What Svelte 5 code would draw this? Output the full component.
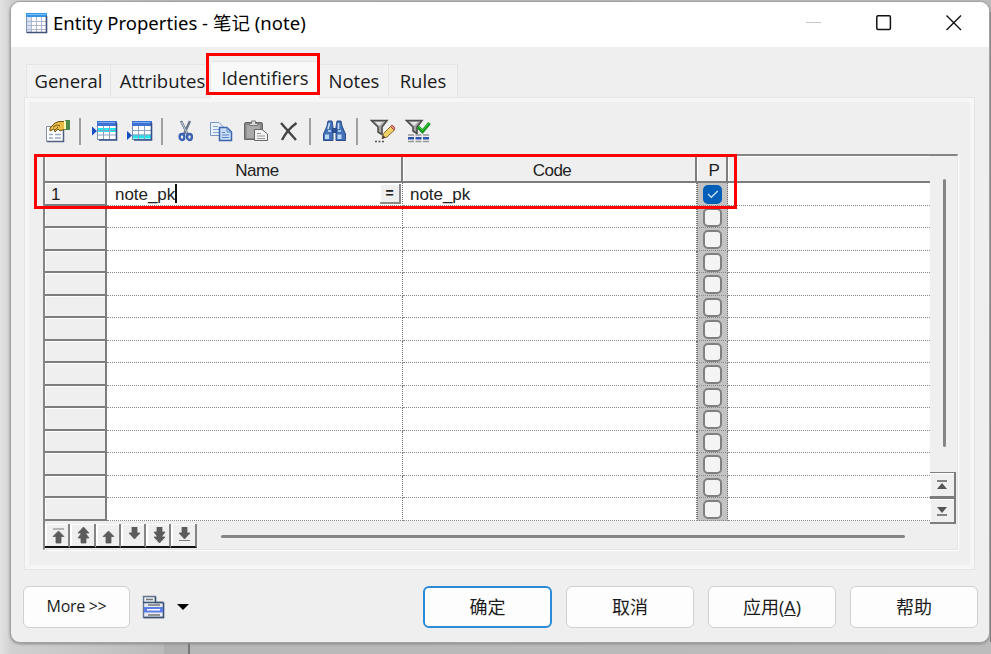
<script lang="ts">
	const tabs = ['General', 'Attributes', 'Identifiers', 'Notes', 'Rules'];
	const activeTab = 'Identifiers';

	interface Row {
		name: string;
		code: string;
		primary: boolean;
	}

	const identifiers: Row[] = [{ name: 'note_pk', code: 'note_pk', primary: true }];

	// The list always shows 15 lines, the unused ones stay blank
	const rows: (Row | null)[] = Array.from({ length: 15 }, (_, i) => identifiers[i] ?? null);

	const moves = [
		'M4 2H15M9.5 4L15 9.5H12V16H7V9.5H4Z',
		'M9.5 0L15 6H12V7L15 11H12V16H7V11H4L7 7V6H4Z',
		'M9.5 4L15 9.5H12V16H7V9.5H4Z',
		'M9.5 12L15 6H12V0H7V6H4Z',
		'M9.5 16L15 10H12V9L15 5H12V0H7V5H4L7 9V10H4Z',
		'M4 13.5H15M9.5 12L15 6H12V0H7V6H4Z'
	];
</script>

{#snippet tableIcon(lit: number)}
	<rect x="5.5" y="1.5" width="19" height="18" fill="#fff" stroke="#7890b8" />
	<rect x="5" y="1" width="20" height="5" fill="#3d72d2" />
	<path d="M6 2.5H23" stroke="#79a9ef" />
	<rect x="6" y={lit} width="18" height="4" fill="#25e5ec" />
	<path d="M6 10.5H24M6 15H24M11.5 6V19M17.5 6V19" stroke="#8ba1c2" fill="none" />
	<path d="M24.5 3V20H7" stroke="#344f87" stroke-width="1.6" fill="none" />
{/snippet}

<div class="desktop">
	<div class="window">
		<header class="titlebar">
			<svg class="app-icon" width="22" height="21" viewBox="0 0 22 21">
				<rect x=".5" y=".5" width="20" height="19" fill="#fff" stroke="#8294b3" />
				<rect width="21" height="4" fill="#3794e5" />
				<path d="M1 1.5H20" stroke="#79c5f5" />
				<rect x="1" y="4" width="4" height="15" fill="#d7e3f2" />
				<path d="M1 8.5H20M1 12.5H20M1 16.5H20M5.5 4V19M10.5 4V19M15.5 4V19" stroke="#adb8cf" />
				<path d="M20.5 3V19.5H1" fill="none" stroke="#3e5277" stroke-width="1.6" />
			</svg>
			<h1>Entity Properties - 笔记 (note)</h1>
			<div class="controls">
				<svg width="16" height="16"><path d="M0 7.5H15" stroke="#c8c8c8" /></svg>
				<svg width="16" height="16"><rect x=".8" y=".8" width="13.6" height="13.6" rx="1.2" fill="none" stroke="#111" stroke-width="1.5" /></svg>
				<svg width="16" height="16"><path d="M.5 .5L15 15M15 .5L.5 15" stroke="#111" stroke-width="1.4" /></svg>
			</div>
		</header>

		<nav class="tabs">
			{#each tabs as tab}
				<button class="tab {tab.toLowerCase()}" class:active={tab === activeTab}>{tab}</button>
			{/each}
		</nav>

		<section class="panel">
			<div class="toolbar">
				<!-- properties -->
				<svg class="t-props" width="26" height="24" viewBox="0 0 26 24">
					<path d="M1.5 6.5H18.5V21.5H1.5Z" fill="#fff" stroke="#8592ac" />
					<path d="M18.5 10V21.5H2" fill="none" stroke="#4f5f80" stroke-width="1.5" />
					<path d="M4 14.5H8M10 14.5H16M4 18H8M10 18H16" stroke="#9daac5" stroke-width="1.5" />
					<path d="M5 8L10 3L14 1.5H20V9L15 11L13 9L10 12L9 9L5 11Z" fill="#e9bb45" stroke="#6c5418" />
					<path d="M8 7L12 5L15 6M10 10L13 7" fill="none" stroke="#765d20" />
					<path d="M20 0H25V10H20Z" fill="#4c8a4b" />
					<path d="M19 1H21V9H19Z" fill="#fff7b0" />
				</svg>
				<i class="sep"></i>
				<!-- insert / add a row -->
				<svg class="t-insert" width="26" height="24" viewBox="0 0 26 24">
					{@render tableIcon(8)}
					<path d="M0 6.5L5 11L0 15.5Z" fill="#174ec1" />
				</svg>
				<svg class="t-add" width="26" height="24" viewBox="0 0 26 24">
					{@render tableIcon(14.5)}
					<path d="M0 11L5 15.5L0 20Z" fill="#174ec1" />
				</svg>
				<i class="sep"></i>
				<svg class="t-cut" width="18" height="24" viewBox="0 0 18 24">
					<path d="M4 1L10.5 14M13 1L7 14" stroke="#68778d" stroke-width="2.5" />
					<path d="M4.5 2L10 13" stroke="#cbd5df" />
					<g fill="none" stroke="#3c63b3" stroke-width="2.4">
						<ellipse cx="5" cy="17" rx="2.4" ry="3" />
						<ellipse cx="12.5" cy="17" rx="2.4" ry="3" />
					</g>
				</svg>
				<svg class="t-copy" width="24" height="22" viewBox="0 0 24 22">
					<path d="M1.5 1.5H10L14.5 6V14.5H1.5Z" fill="#eaf2fd" stroke="#7895c4" />
					<path d="M4 5.5H9M4 8.5H10M4 11.5H10" stroke="#84a4d5" />
					<path d="M10.5 6.5H18L22.5 11V19.5H10.5Z" fill="#c9dcf6" stroke="#3c65ad" stroke-width="1.5" />
					<path d="M18 6.5V11H22.5M13 11.5H16M13 14H20M13 16.5H20" fill="none" stroke="#5f87c7" />
				</svg>
				<svg class="t-paste" width="26" height="23" viewBox="0 0 26 23">
					<path d="M1.5 3.5Q1.5 2.5 3 2.5H18Q19.5 2.5 19.5 4V19.5H1.5Z" fill="#858585" stroke="#666" />
					<path d="M3.5 5H17V18H3.5Z" fill="#aaa" />
					<path d="M6.5 5.5V3.5H8.5V1H12.5V3.5H15V5.5Z" fill="#ddd" stroke="#777" />
					<path d="M11.5 9.5H19L24.5 14V20.5H11.5Z" fill="#f2f2f2" stroke="#666" />
					<path d="M14 13.5H18M14 16H22M14 18.5H22" stroke="#999" />
				</svg>
				<svg class="t-delete" width="20" height="22" viewBox="0 0 20 22">
					<path d="M2 2L17 19M17.5 2Q8 9 3 19" fill="none" stroke="#444" stroke-width="2.4" />
				</svg>
				<i class="sep"></i>
				<svg class="t-find" width="25" height="23" viewBox="0 0 25 23">
					<path d="M6 1H10L11 7V20.5H1.5V14L5 6Z" fill="#4470b6" stroke="#294d8e" />
					<path d="M15 1H19L20 6L23.5 14V20.5H14V7Z" fill="#4470b6" stroke="#294d8e" />
					<path d="M10 8H15V13H10Z" fill="#294d8e" />
					<path d="M3 14.5H7V19H3ZM15.5 14.5H19.5V19H15.5Z" fill="#b7d7f6" />
					<path d="M7.5 3L6 9M16.5 3V9M6 11H9M16 11H19" stroke="#c8e0fa" stroke-width="1.6" />
				</svg>
				<i class="sep"></i>
				<svg class="t-filter" width="26" height="25" viewBox="0 0 26 25">
					<path d="M1.5 1.5H17L12 8V15.5L8 13V8Z" fill="#a6a6a6" stroke="#4d4d4d" stroke-width="1.6" />
					<path d="M5 3H13L9 7Z" fill="#e5e5e5" />
					<path d="M5 22.5H14" stroke="#555" stroke-width="1.5" stroke-dasharray="2 1.5" />
					<path d="M12 19.5L13.5 14.5L20.5 7.5L24.5 11L17 18Z" fill="#f0cf67" stroke="#8a672c" />
					<path d="M20.5 7.5L22 6L25 9L24 11Z" fill="#ef8a7e" stroke="#a84d45" />
					<path d="M12 20L13 16L15.5 18.5Z" fill="#444" />
				</svg>
				<svg class="t-apply" width="26" height="25" viewBox="0 0 26 25">
					<path d="M1.5 1.5H17L12 8V14.5L8 12V8Z" fill="#a6a6a6" stroke="#4d4d4d" stroke-width="1.6" />
					<path d="M5 3H13L9 7Z" fill="#e5e5e5" />
					<path d="M13 8L17.5 12.5L24.5 4" fill="none" stroke="#15961f" stroke-width="3.5" />
					<path d="M14 8L17.5 11.5L24 4" fill="none" stroke="#37d63a" />
					<path d="M3 16H25M3 22.5H25" stroke="#999" stroke-width="1.5" stroke-dasharray="6 1.5" />
					<path d="M3 19.3H25" stroke="#2e55b2" stroke-width="2.4" stroke-dasharray="6 1.5" />
				</svg>
			</div>

			<div class="list">
				<div class="upper">
					<div class="grid">
						<div class="row head">
							<span class="num"></span>
							<span class="name">Name</span>
							<span class="code">Code</span>
							<span class="primary">P</span>
							<span class="rest"></span>
						</div>
						{#each rows as row, i}
							<div class="row">
								<span class="num">{row ? i + 1 : ''}</span>
								<span class="name">
									{#if row}
										<span class="value">{row.name}</span><i class="caret"></i>
										<button class="equals">=</button>
									{/if}
								</span>
								<span class="code">{row?.code ?? ''}</span>
								<span class="primary">
									<span class="check" class:checked={row?.primary}>
										{#if row?.primary}
											<svg width="12" height="9"><path d="M1 4L4.3 7.3L10.8 1" fill="none" stroke="#cfe3f6" stroke-width="1.3" /></svg>
										{/if}
									</span>
								</span>
								<span class="rest"></span>
							</div>
						{/each}
					</div>
					<div class="vscroll">
						<div class="vthumb"></div>
						<button><svg width="12" height="10"><path d="M1 1H11" stroke="#555" stroke-width="1.4" /><path d="M6 3L11 9H1Z" fill="#555" /></svg></button>
						<button><svg width="12" height="10"><path d="M1 9H11" stroke="#555" stroke-width="1.4" /><path d="M6 7L11 1H1Z" fill="#555" /></svg></button>
					</div>
				</div>
				<div class="lower">
					{#each moves as d}
						<button class="move"><svg width="19" height="17"><path {d} fill="#5c5c5c" stroke="#5c5c5c" stroke-width=".8" /></svg></button>
					{/each}
					<div class="hthumb"></div>
				</div>
			</div>
		</section>

		<footer>
			<button class="btn more">More &gt;&gt;</button>
			<svg class="report" width="23" height="24" viewBox="0 0 23 24">
				<path d="M1.5 1.5H13.5V7.5H21.5V22.5H1.5Z" fill="#e5ebf2" stroke="#65758d" stroke-width="1.4" />
				<path d="M1 7.5H21M13.5 2V7M21.5 8V22.5H2" fill="none" stroke="#3d5375" stroke-width="1.4" />
				<path d="M4 4.5H11M6 10H18M6 20H18" stroke="#777" stroke-width="1.5" />
				<rect x="2" y="12" width="19" height="5.5" fill="#5c7ee6" />
				<path d="M5 14.7H18" stroke="#fff" stroke-width="1.5" />
			</svg>
			<svg class="drop" width="12" height="8"><path d="M0 1H12L6 7Z" fill="#000" /></svg>
			<span class="space"></span>
			<button class="btn ok">确定</button>
			<button class="btn">取消</button>
			<button class="btn">应用(<u>A</u>)</button>
			<button class="btn">帮助</button>
		</footer>
	</div>

	<div class="mark mark-tab"></div>
	<div class="mark mark-row"></div>
</div>

<style>
	:global(body) {
		margin: 0;
		background: #bbb;
	}

	* {
		box-sizing: border-box;
	}

	button {
		font: inherit;
		color: inherit;
		padding: 0;
		margin: 0;
		border: 0;
		background: none;
	}

	svg {
		display: block;
		flex: none;
	}

	.desktop {
		position: relative;
		width: 991px;
		height: 654px;
		padding: 1px 1px 0 10px;
		overflow: hidden;
		background:
			linear-gradient(#777, #777) 188px 100% / 2px 11px no-repeat,
			linear-gradient(#b0b0b0, #b0b0b0) 164px 100% / 25px 11px no-repeat,
			linear-gradient(#888, #777) 100% 12px / 1px 630px no-repeat,
			linear-gradient(90deg, #e2e2e2 0, #d0d0d0 12px, #c5c5c5 100px, #b8b8b8 180px, #bcbcbc);
	}

	.window {
		display: flex;
		flex-direction: column;
		width: 980px;
		height: 642px;
		border: 1px solid #a3a3a3;
		border-radius: 10px;
		background: #efefef;
		overflow: hidden;
		box-shadow: 0 1px 3px #888;
		font-family: 'Open Sans', 'Noto Sans CJK SC', sans-serif;
		color: #1b1b1b;
	}

	.titlebar {
		display: flex;
		align-items: center;
		height: 45px;
		flex: none;
		padding: 0 27px 3px 15px;
		background: #fff;
	}

	h1 {
		margin: 0 auto 0 5px;
		font-family: 'Noto Sans', 'Noto Sans CJK SC', sans-serif;
		font-size: 18.5px;
		font-weight: 400;
		letter-spacing: 0.02px;
		line-height: 24px;
		color: #000;
		white-space: nowrap;
	}

	.controls {
		display: flex;
		gap: 54px;
	}

	.tabs {
		display: flex;
		align-items: flex-end;
		flex: none;
		height: 50px;
		padding-left: 15px;
	}

	.tab {
		height: 33px;
		border: 1px solid #e5e5e5;
		border-left-width: 0;
		border-bottom: 0;
		background: #f2f2f2;
		font-size: 18.5px;
		line-height: 30px;
		white-space: nowrap;
	}

	.general { width: 85px; border-left-width: 1px; }
	.attributes { width: 100px; padding-left: 4px; }
	.identifiers { width: 109px; }
	.notes { width: 69px; }
	.rules { width: 69px; }

	.tab.active {
		position: relative;
		height: 37px;
		margin-bottom: -1px;
		padding-bottom: 5px;
		background: #f9f9f9;
	}

	.panel {
		width: 951px;
		height: 473px;
		flex: none;
		margin-left: 13px;
		padding: 0 16px 0 14px;
		border: 1px solid #e6e6e6;
		box-shadow: inset 0 0 0 4px #f6f6f6;
	}

	.toolbar {
		display: flex;
		align-items: center;
		height: 56px;
		padding: 11px 0 0 6px;
	}

	.sep {
		width: 2px;
		height: 27px;
		background: #a0a0a0;
	}

	.t-props { margin-right: 8px; }
	.t-insert { margin-left: 11px; }
	.t-add { margin: 0 8px 0 9px; }
	.t-cut { margin: 0 14px 0 14px; }
	.t-paste { margin: 0 10px; }
	.t-delete { margin-right: 10px; }
	.t-find { margin: 0 9px 0 11px; }
	.t-filter { margin: 0 9px 0 12px; }

	.list {
		height: 396px;
		border: 2px solid #858585;
		border-right: 1px solid #e3e3e3;
		border-bottom: 1px solid #e3e3e3;
		box-shadow: 1px 1px 0 #fff;
		margin-left: 4px;
	}

	.upper {
		display: flex;
		height: 368px;
	}

	.grid {
		width: 885px;
		flex: none;
		font-family: 'Liberation Sans', Arial, sans-serif;
		font-size: 17px;
		letter-spacing: -0.05px;
		color: #222;
	}

	.row {
		display: flex;
		height: 22.5px;
		line-height: 23px;
	}

	.row > span {
		display: flex;
		height: 100%;
		flex: none;
		background: #fff;
		border-right: 1px dotted #777;
		border-bottom: 1px dotted #888;
	}

	.row > .num {
		width: 62px;
		padding-left: 6px;
		background: #efefef;
		border-right: 2px solid #7d7d7d;
		border-bottom: 2px solid #7d7d7d;
		box-shadow: inset 1px 1px #fff;
	}

	.row > .name {
		width: 296px;
		padding-left: 8px;
	}

	.row > .code {
		width: 294px;
		padding-left: 7px;
	}

	.row > .primary {
		width: 31px;
		justify-content: center;
		align-items: center;
		background: #c3c3c3;
		border-left: 1px dotted #777;
	}

	.row > .rest {
		width: 202px;
		border-right: 0;
	}

	.row.head {
		height: 27px;
		line-height: 30px;
		letter-spacing: -0.5px;
	}

	.row.head > span {
		justify-content: center;
		align-items: stretch;
		background: #efefef;
		border: solid #7d7d7d;
		border-width: 0 2px 2px 0;
		box-shadow: inset 1px 1px #fff;
	}

	.row.head > .name,
	.row.head > .code {
		padding: 0 0 0 6px;
	}

	.row.head > .primary {
		padding-left: 5px;
	}

	.row.head > .rest {
		border-right: 0;
	}

	.caret {
		width: 1.5px;
		height: 19px;
		margin-top: 1px;
		background: #111;
	}

	.equals {
		width: 21px;
		height: 20px;
		margin: 1px 1px 0 auto;
		border: solid #8a8a8a;
		border-width: 0 2px 2px 0;
		background: #efefef;
		box-shadow: inset 1px 1px #fff;
		font-size: 14px;
		font-weight: 700;
		line-height: 17px;
	}

	.check {
		display: flex;
		align-items: center;
		justify-content: center;
		width: 19px;
		height: 19px;
		margin-top: 2px;
		border: 2px solid #808080;
		border-radius: 5px;
		background: #f4f4f4;
	}

	.check.checked {
		border-color: #005fb8;
		background: #005fb8;
	}

	.vscroll {
		display: flex;
		flex-direction: column;
		width: 26px;
	}

	.vthumb {
		width: 3px;
		height: 268px;
		margin: 23px 0 25px 13px;
		border-radius: 2px;
		background: #858585;
	}

	.vscroll button {
		display: flex;
		align-items: center;
		justify-content: center;
		width: 26px;
		height: 26px;
		border: solid #7d7d7d;
		border-width: 1px 2px 2px 0;
		box-shadow: inset 1px 1px #fff;
	}

	.lower {
		display: flex;
		height: 25px;
	}

	.move {
		display: flex;
		align-items: center;
		justify-content: center;
		width: 25.3px;
		height: 24px;
		border-right: 2px solid #858585;
		border-bottom: 2px solid #111;
		box-shadow: inset 2px 1px #fff;
	}

	.move svg {
		margin-left: 3px;
	}

	.hthumb {
		width: 684px;
		height: 3px;
		margin: 11px 0 0 24px;
		border-radius: 2px;
		background: #858585;
	}

	footer {
		display: flex;
		align-items: center;
		gap: 14px;
		height: 42px;
		margin: 16px 11px 0 12px;
	}

	.btn {
		width: 128px;
		height: 42px;
		padding-bottom: 3px;
		border: 1px solid #d0d0d0;
		border-radius: 6px;
		background: #fdfdfd;
		font-family: 'Open Sans', 'Noto Sans CJK SC', sans-serif;
		font-size: 18px;
	}

	.btn.more {
		width: 107px;
		font-size: 16px;
		letter-spacing: -0.3px;
	}

	.btn.ok {
		width: 129px;
		border: 2px solid #2b8bd9;
	}

	.report {
		margin-left: -2px;
	}

	.drop {
		margin-left: -2px;
	}

	.space {
		flex: 1;
	}

	/* red callouts over the tab and the first line */
	.mark {
		position: absolute;
		border: 3px solid #fe0000;
	}

	.mark-tab {
		left: 206px;
		top: 53px;
		width: 114px;
		height: 42px;
	}

	.mark-row {
		left: 34px;
		top: 154px;
		width: 703px;
		height: 55px;
	}
</style>
